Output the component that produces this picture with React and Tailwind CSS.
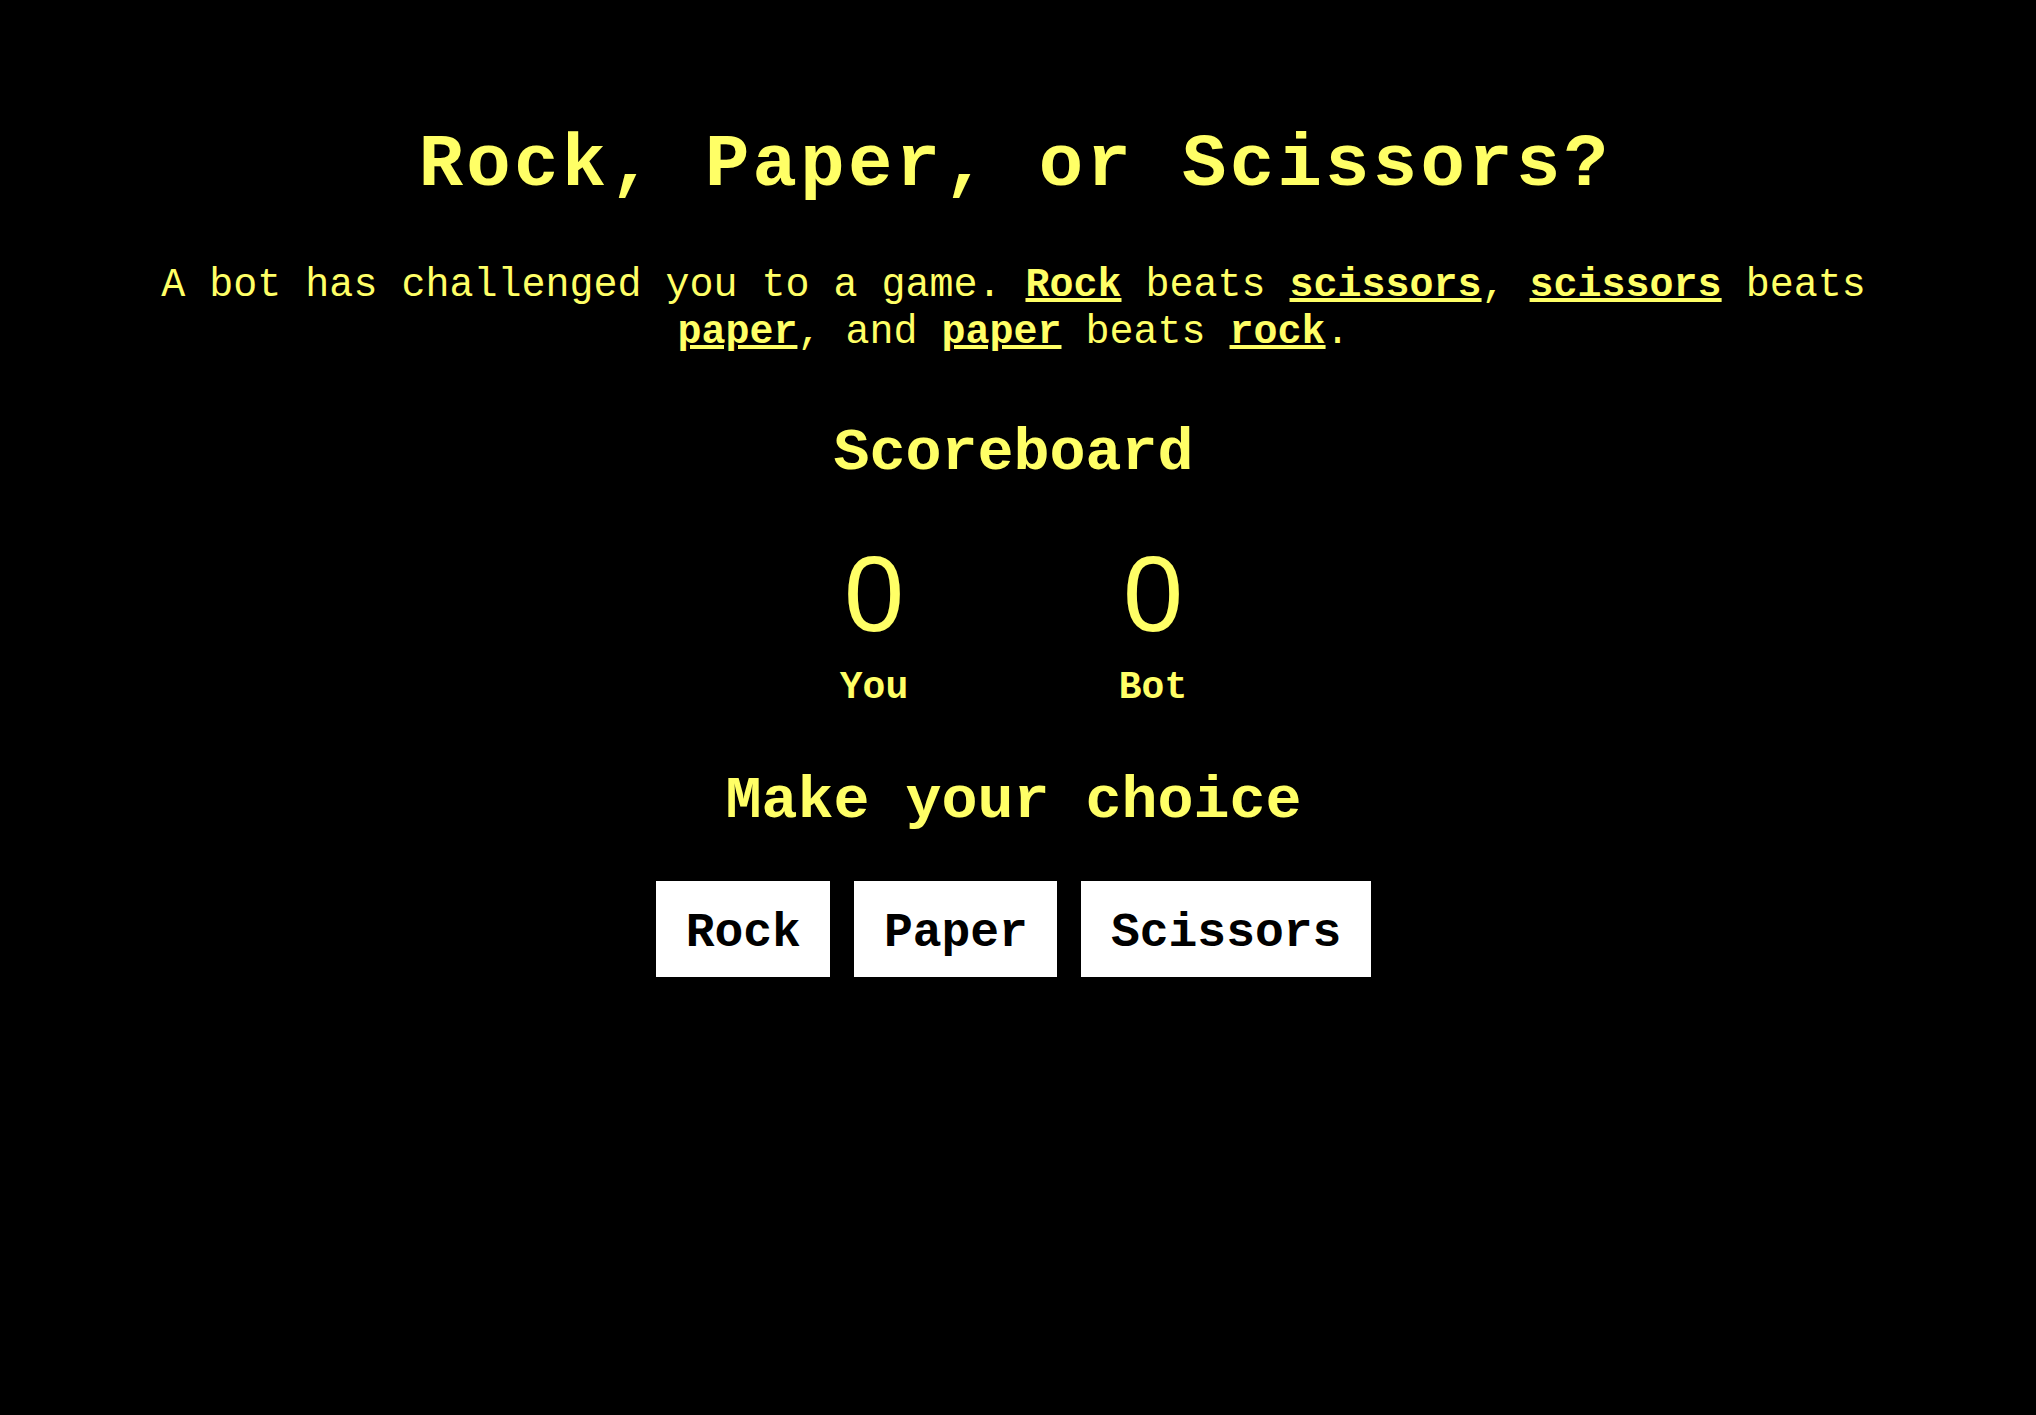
import React, { useState } from "react";

const choices = ["Rock", "Paper", "Scissors"];

function Rule({ children }) {
  return <strong className="font-bold underline">{children}</strong>;
}

function ScoreColumn({ value, label }) {
  return (
    <div className="flex w-[140px] flex-col items-center">
      <span className="font-['Liberation_Sans',Arial,sans-serif] text-[108px] font-normal leading-none">
        {value}
      </span>
      <span className="mt-[21px] text-[38px] font-bold leading-none">{label}</span>
    </div>
  );
}

export default function App() {
  const [score, setScore] = useState({ you: 0, bot: 0 });

  const play = (choice) => {
    const bot = choices[Math.floor(Math.random() * 3)];
    if (bot === choice) return;
    const wins =
      (choice === "Rock" && bot === "Scissors") ||
      (choice === "Scissors" && bot === "Paper") ||
      (choice === "Paper" && bot === "Rock");
    setScore((s) => (wins ? { ...s, you: s.you + 1 } : { ...s, bot: s.bot + 1 }));
  };

  return (
    <div className="min-h-screen bg-black pr-[9px] pt-[128px] text-center font-['Liberation_Mono','Courier_New',monospace] text-[#ffff66]">
      <h1 className="pl-[3px] text-[74px] font-bold leading-none tracking-[3.3px]">
        Rock, Paper, or Scissors?
      </h1>

      <p className="mt-[61px] px-[118px] text-[40px] leading-[46.7px]">
        A bot has challenged you to a game. <Rule>Rock</Rule> beats <Rule>scissors</Rule>,{" "}
        <Rule>scissors</Rule> beats <Rule>paper</Rule>, and <Rule>paper</Rule> beats{" "}
        <Rule>rock</Rule>.
      </p>

      <h2 className="mt-[67px] text-[60px] font-bold leading-none">Scoreboard</h2>

      <div className="mt-[57px] flex justify-center gap-[139px]">
        <ScoreColumn value={score.you} label="You" />
        <ScoreColumn value={score.bot} label="Bot" />
      </div>

      <h2 className="mt-[64px] text-[60px] font-bold leading-none">Make your choice</h2>

      <div className="mt-[50px] flex justify-center gap-[24px]">
        {choices.map((c) => (
          <button
            key={c}
            onClick={() => play(c)}
            className="h-[96px] bg-white px-[29.5px] pt-[8px] text-[48px] font-bold leading-none text-black"
          >
            {c}
          </button>
        ))}
      </div>
    </div>
  );
}
